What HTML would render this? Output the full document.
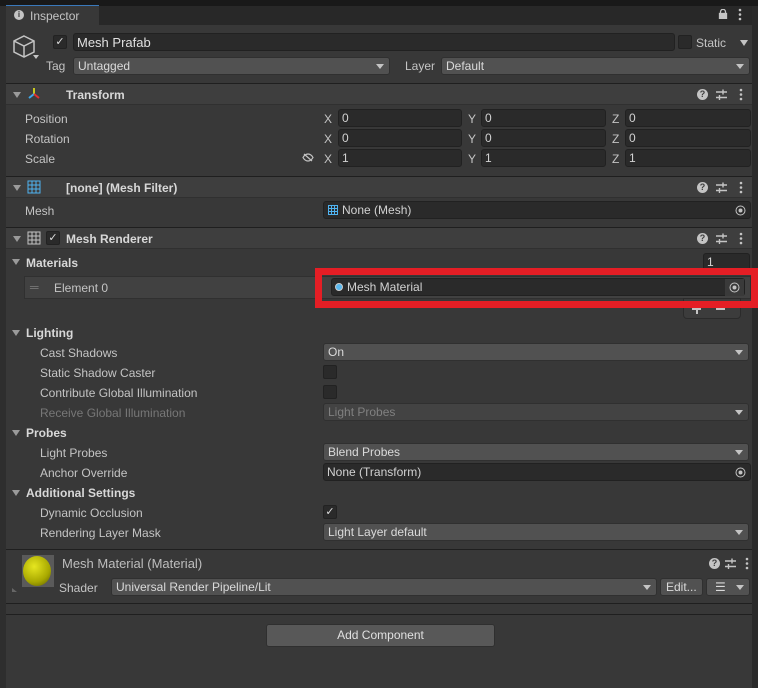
<!DOCTYPE html><html><head><style>
*{margin:0;padding:0;box-sizing:border-box}
body{width:758px;height:688px;background:#383838;font-family:"Liberation Sans",sans-serif;font-size:12px;color:#c4c4c4;position:relative;overflow:hidden}
.a{position:absolute}
.t{position:absolute;white-space:nowrap;line-height:14px}
.f{position:absolute;background:#2a2a2a;border:1px solid #212121;border-radius:3px;height:18px;padding-left:3px;line-height:17px;color:#d2d2d2}
.d{position:absolute;background:#515151;border:1px solid #303030;border-radius:3px;height:18px;padding-left:4px;line-height:17px;color:#dadada}
.d:after{content:"";position:absolute;right:5px;top:6px;border-left:4px solid transparent;border-right:4px solid transparent;border-top:5px solid #c4c4c4}
.h{position:absolute;left:6px;right:6px;height:22px;background:#3e3e3e;border-top:1px solid #1f1f1f;border-bottom:1px solid #303030}
.tri{position:absolute;border-left:4px solid transparent;border-right:4px solid transparent;border-top:6px solid #9a9a9a}
.b{font-weight:bold;color:#d8d8d8}
.cb{position:absolute;width:14px;height:14px;background:#2a2a2a;border:1px solid #222;border-radius:2px;color:#ddd;font-size:11px;line-height:12px;text-align:center}
.q{position:absolute;width:11px;height:11px;border-radius:50%;background:#c4c4c4;color:#3e3e3e;font-size:9px;font-weight:bold;text-align:center;line-height:11px}
</style></head><body>
<div class="a" style="left:0;top:0;width:758px;height:6px;background:#191919"></div>
<div class="a" style="left:0;top:6px;width:758px;height:19px;background:#282828"></div>
<div class="a" style="left:0;top:6px;width:6px;height:682px;background:#2e2e2e"></div>
<div class="a" style="left:752px;top:6px;width:6px;height:682px;background:#2a2a2a"></div>
<div class="a" style="left:6px;top:5px;width:93px;height:20px;background:#383838;border-top:1px solid #3a79bb"></div>
<div class="a" style="left:14px;top:10px;width:10px;height:10px;border-radius:50%;background:#c4c4c4;color:#383838;font-size:8px;text-align:center;line-height:10px;font-weight:bold">i</div>
<div class="t" style="left:30px;top:9px">Inspector</div>
<svg class="a" style="left:718px;top:9px" width="10" height="10" fill="none" stroke="#c4c4c4" stroke-width="1.3"><path d="M2.5 4V2.8a2.5 2.5 0 0 1 5 0V4"/><rect x="1.5" y="4.5" width="7" height="5" fill="#c4c4c4"/></svg>
<svg class="a" style="left:738px;top:8px" width="4" height="14" fill="#c4c4c4"><circle cx="2" cy="2" r="1.3"/><circle cx="2" cy="6.5" r="1.3"/><circle cx="2" cy="11" r="1.3"/></svg>
<!-- object header -->
<svg class="a" style="left:12px;top:34px" width="26" height="26" viewBox="0 0 26 26" fill="none" stroke="#c4c4c4" stroke-width="1.5"><path d="M12 2 L22 7 L22 18 L12 23 L2 18 L2 7 Z M2 7 L12 12 L22 7 M12 12 L12 23"/></svg>
<div class="tri" style="left:33px;top:55px;border-top-color:#c4c4c4;border-width:4px 3px 0"></div>
<div class="cb" style="left:53px;top:35px">✓</div>
<div class="f" style="left:73px;top:33px;width:602px;height:18px;font-size:13px;color:#e0e0e0">Mesh Prafab</div>
<div class="cb" style="left:678px;top:35px"></div>
<div class="t" style="left:696px;top:36px">Static</div>
<div class="tri" style="left:740px;top:40px;border-top-color:#c4c4c4"></div>
<div class="t" style="left:46px;top:59px">Tag</div>
<div class="d" style="left:73px;top:57px;width:317px">Untagged</div>
<div class="t" style="left:405px;top:59px">Layer</div>
<div class="d" style="left:441px;top:57px;width:309px">Default</div>

<svg width="0" height="0" style="position:absolute"><defs>
<g id="sl" stroke="#c4c4c4" stroke-width="1.4"><path d="M0 3H11 M0 8.5H11"/><path d="M7 0.5V5.5 M3.5 6V11"/></g>
<g id="dt" fill="#c4c4c4"><circle cx="2" cy="2" r="1.3"/><circle cx="2" cy="6.5" r="1.3"/><circle cx="2" cy="11" r="1.3"/></g>
</defs></svg>

<!-- transform -->
<div class="h" style="top:83px"></div>
<div class="tri" style="left:13px;top:92px"></div>
<svg class="a" style="left:27px;top:87px" width="14" height="14"><path d="M7 1 V7" stroke="#c8c820" stroke-width="2"/><path d="M7 7 L2 11" stroke="#3fa8e8" stroke-width="2"/><path d="M7 7 L12 11" stroke="#e03030" stroke-width="2"/></svg>
<div class="t b" style="left:66px;top:88px">Transform</div>
<div class="q" style="left:697px;top:89px">?</div><svg class="a" style="left:716px;top:89px" width="11" height="12"><use href="#sl"/></svg><svg class="a" style="left:739px;top:88px" width="4" height="14"><use href="#dt"/></svg>
<div class="t" style="left:25px;top:112px">Position</div>
<div class="t" style="left:25px;top:132px">Rotation</div>
<div class="t" style="left:25px;top:152px">Scale</div>
<svg class="a" style="left:302px;top:153px" width="12" height="9" fill="none" stroke="#c4c4c4" stroke-width="1.2"><path d="M1 4.5 Q3 1 6 1 Q9 1 11 4.5 Q9 8 6 8 Q3 8 1 4.5Z M2 1 L10 8"/></svg>
<div class="t" style="left:324px;top:112px">X</div><div class="f" style="left:338px;top:109px;width:124px">0</div>
<div class="t" style="left:468px;top:112px">Y</div><div class="f" style="left:481px;top:109px;width:125px">0</div>
<div class="t" style="left:612px;top:112px">Z</div><div class="f" style="left:625px;top:109px;width:126px">0</div>
<div class="t" style="left:324px;top:132px">X</div><div class="f" style="left:338px;top:129px;width:124px">0</div>
<div class="t" style="left:468px;top:132px">Y</div><div class="f" style="left:481px;top:129px;width:125px">0</div>
<div class="t" style="left:612px;top:132px">Z</div><div class="f" style="left:625px;top:129px;width:126px">0</div>
<div class="t" style="left:324px;top:152px">X</div><div class="f" style="left:338px;top:149px;width:124px">1</div>
<div class="t" style="left:468px;top:152px">Y</div><div class="f" style="left:481px;top:149px;width:125px">1</div>
<div class="t" style="left:612px;top:152px">Z</div><div class="f" style="left:625px;top:149px;width:126px">1</div>
<!-- mesh filter -->
<div class="h" style="top:176px"></div>
<div class="tri" style="left:13px;top:185px"></div>
<svg class="a" style="left:27px;top:180px" width="14" height="14" stroke="#4fb3f0" fill="none"><path d="M1 1H13V13H1Z M5 1V13 M9 1V13 M1 5H13 M1 9H13"/></svg>
<div class="t b" style="left:66px;top:181px">[none] (Mesh Filter)</div>
<div class="q" style="left:697px;top:182px">?</div><svg class="a" style="left:716px;top:182px" width="11" height="12"><use href="#sl"/></svg><svg class="a" style="left:739px;top:181px" width="4" height="14"><use href="#dt"/></svg>
<div class="t" style="left:25px;top:204px">Mesh</div>
<div class="f" style="left:323px;top:201px;width:428px;padding-left:18px">None (Mesh)</div>
<svg class="a" style="left:328px;top:205px" width="10" height="10" stroke="#4fb3f0" fill="none"><path d="M.5 .5H9.5V9.5H.5Z M3.5 .5V9.5 M6.5 .5V9.5 M.5 3.5H9.5 M.5 6.5H9.5"/></svg>
<svg class="a" style="left:735px;top:205px" width="11" height="11" fill="none" stroke="#c4c4c4"><circle cx="5.5" cy="5.5" r="4.5"/><circle cx="5.5" cy="5.5" r="1.5" fill="#c4c4c4"/></svg>
<!-- mesh renderer -->
<div class="h" style="top:227px"></div>
<div class="tri" style="left:13px;top:236px"></div>
<svg class="a" style="left:27px;top:231px" width="14" height="14" stroke="#c4c4c4" fill="none"><path d="M1 1H13V13H1Z M5 1V13 M9 1V13 M1 5H13 M1 9H13"/></svg>
<div class="cb" style="left:46px;top:231px">✓</div>
<div class="t b" style="left:66px;top:232px">Mesh Renderer</div>
<div class="q" style="left:697px;top:233px">?</div><svg class="a" style="left:716px;top:233px" width="11" height="12"><use href="#sl"/></svg><svg class="a" style="left:739px;top:232px" width="4" height="14"><use href="#dt"/></svg>
<div class="tri" style="left:12px;top:259px"></div>
<div class="t b" style="left:26px;top:256px">Materials</div>
<div class="f" style="left:703px;top:253px;width:47px">1</div>
<div class="a" style="left:24px;top:276px;width:727px;height:23px;background:#414141;border:1px solid #303030"></div>
<div class="t" style="left:30px;top:280px;color:#777">═</div>
<div class="t" style="left:54px;top:281px">Element 0</div>
<div class="a" style="left:683px;top:298px;width:58px;height:21px;background:#3c3c3c;border:1px solid #2b2b2b;border-radius:0 0 4px 4px"></div>
<div class="a" style="left:692px;top:308px;width:9px;height:2px;background:#c4c4c4"></div><div class="a" style="left:696px;top:308px;width:2px;height:6px;background:#c4c4c4"></div>
<div class="a" style="left:716px;top:308px;width:9px;height:2px;background:#c4c4c4"></div>
<div class="a" style="left:315px;top:268px;width:443px;height:40px;border:7px solid #e41e25"></div>
<div class="f" style="left:331px;top:278px;width:414px;padding-left:15px">Mesh Material</div>
<div class="a" style="left:335px;top:283px;width:8px;height:8px;border-radius:50%;background:#5ab8ee;border:1px solid #ccc"></div>
<div class="a" style="left:725px;top:279px;width:19px;height:17px;background:#3a3a3a"></div>
<svg class="a" style="left:729px;top:282px" width="11" height="11" fill="none" stroke="#c4c4c4"><circle cx="5.5" cy="5.5" r="4.5"/><circle cx="5.5" cy="5.5" r="1.5" fill="#c4c4c4"/></svg>
<div class="tri" style="left:12px;top:330px"></div><div class="t b" style="left:26px;top:326px">Lighting</div>
<div class="t" style="left:40px;top:346px">Cast Shadows</div><div class="d" style="left:323px;top:343px;width:426px">On</div>
<div class="t" style="left:40px;top:366px">Static Shadow Caster</div><div class="cb" style="left:323px;top:365px"></div>
<div class="t" style="left:40px;top:386px">Contribute Global Illumination</div><div class="cb" style="left:323px;top:385px"></div>
<div class="t" style="left:40px;top:406px;color:#777">Receive Global Illumination</div><div class="d" style="left:323px;top:403px;width:426px;background:#434343;color:#808080">Light Probes</div>
<div class="tri" style="left:12px;top:430px"></div><div class="t b" style="left:26px;top:426px">Probes</div>
<div class="t" style="left:40px;top:446px">Light Probes</div><div class="d" style="left:323px;top:443px;width:426px">Blend Probes</div>
<div class="t" style="left:40px;top:466px">Anchor Override</div><div class="f" style="left:323px;top:463px;width:428px">None (Transform)</div>
<svg class="a" style="left:735px;top:467px" width="11" height="11" fill="none" stroke="#c4c4c4"><circle cx="5.5" cy="5.5" r="4.5"/><circle cx="5.5" cy="5.5" r="1.5" fill="#c4c4c4"/></svg>
<div class="tri" style="left:12px;top:490px"></div><div class="t b" style="left:26px;top:486px">Additional Settings</div>
<div class="t" style="left:40px;top:506px">Dynamic Occlusion</div><div class="cb" style="left:323px;top:505px">✓</div>
<div class="t" style="left:40px;top:526px">Rendering Layer Mask</div><div class="d" style="left:323px;top:523px;width:426px">Light Layer default</div>
<!-- material -->
<div class="a" style="left:6px;top:549px;width:746px;height:1px;background:#1f1f1f"></div>
<div class="a" style="left:22px;top:555px;width:32px;height:32px;background:#5a5a5a"></div>
<div class="a" style="left:23px;top:556px;width:28px;height:30px;border-radius:50%;background:radial-gradient(circle at 40% 35%,#e6e620,#a8a800 60%,#555500)"></div>
<div class="tri" style="left:12px;top:588px;border-width:4px 0 4px 5px;border-color:transparent transparent transparent #666"></div>
<div class="t" style="left:62px;top:557px;font-size:13px;color:#bdbdbd">Mesh Material (Material)</div>
<div class="q" style="left:709px;top:558px">?</div><svg class="a" style="left:725px;top:558px" width="11" height="12"><use href="#sl"/></svg><svg class="a" style="left:745px;top:557px" width="4" height="14"><use href="#dt"/></svg>
<div class="t" style="left:59px;top:581px">Shader</div>
<div class="d" style="left:111px;top:578px;width:546px">Universal Render Pipeline/Lit</div>
<div class="d" id="e" style="left:660px;top:578px;width:43px;padding-left:5px">Edit...</div>
<div class="d" style="left:706px;top:578px;width:44px;padding-left:8px">☰</div>
<div class="a" style="left:6px;top:603px;width:746px;height:1px;background:#1f1f1f"></div>
<div class="a" style="left:6px;top:614px;width:746px;height:1px;background:#1f1f1f"></div>
<div class="a" style="left:266px;top:624px;width:229px;height:23px;background:#585858;border:1px solid #2f2f2f;border-radius:3px;text-align:center;line-height:21px;color:#e0e0e0">Add Component</div>
<style>#e:after{display:none}</style>
</body></html>
